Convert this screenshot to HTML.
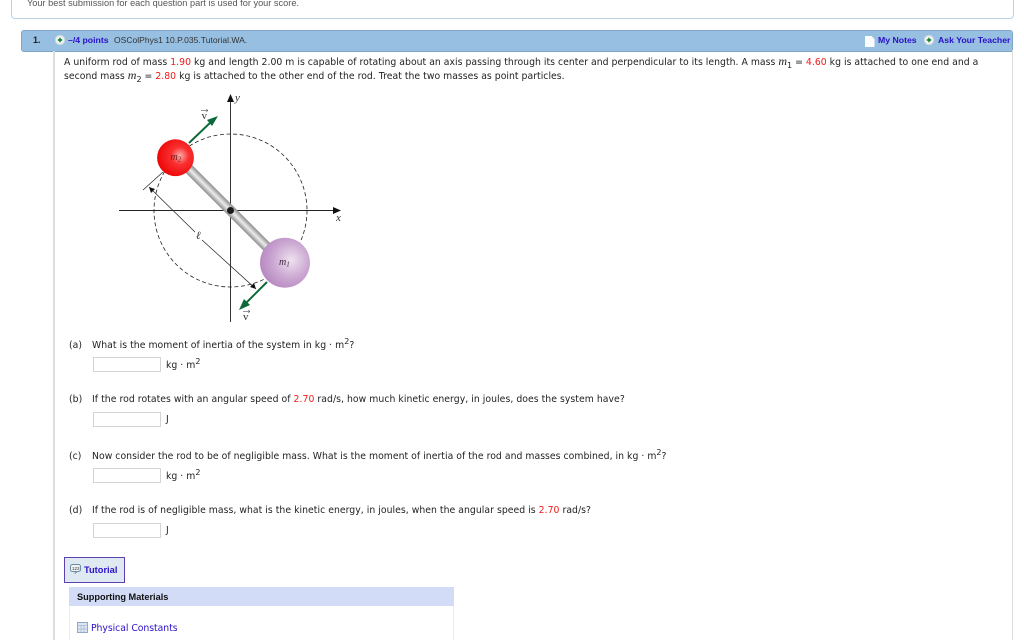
<!DOCTYPE html>
<html><head><meta charset="utf-8">
<style>
html,body{margin:0;padding:0;background:#fff;width:1024px;height:640px;overflow:hidden}
body{position:relative;font-family:"DejaVu Sans","Liberation Sans",sans-serif;color:#222}
.t{position:absolute;white-space:nowrap;font-size:9.3px;line-height:12px;color:#222}
.a{font-family:"Liberation Sans",sans-serif}
.r{color:#f01818}
i{font-family:"Liberation Serif",serif;font-size:12px}
sub,sup{font-size:8px;line-height:0}
.box{position:absolute;width:66px;height:13px;border:1px solid #d4d4d4;left:93px;background:#fff}
.b{color:#2a10c8;font-weight:bold;font-family:"Liberation Sans",sans-serif;font-size:8.7px}
</style></head><body>
<div style="position:absolute;left:11px;top:-10px;width:1001px;height:27px;border:1px solid #b9d3e6;border-radius:4px"></div>
<div class="t a" style="left:27px;top:-3px;font-size:9.2px;color:#555;letter-spacing:.01px">Your best submission for each question part is used for your score.</div>

<div style="position:absolute;left:21px;top:30px;width:990px;height:20px;background:#97bfe1;border:1px solid #7fa6c8;border-radius:3px 3px 0 3px"></div>
<div style="position:absolute;left:53px;top:51px;width:2px;height:589px;background:#ddd"></div>
<div style="position:absolute;left:1012px;top:50px;width:1px;height:590px;background:#ddd"></div>
<div class="t a" style="left:33px;top:34px;font-weight:bold;font-size:9px;color:#222">1.</div>
<svg style="position:absolute;left:54px;top:34px" width="12" height="12"><circle cx="6" cy="6" r="4.8" fill="#eef2f2" stroke="#c5d3dc"/><path d="M3.8 6H8.2M6 3.8V8.2" stroke="#0c7a22" stroke-width="1.4"/></svg>
<div class="t b" style="left:68px;top:34px">–/4 points</div>
<div class="t a" style="left:114px;top:34px;font-size:8.55px;color:#333">OSColPhys1 10.P.035.Tutorial.WA.</div>
<svg style="position:absolute;left:865px;top:36px" width="10" height="11"><path d="M0 0H6.500L9.500 3V11H0Z" fill="#fbfcfd"/></svg>
<div class="t b" style="left:878px;top:34px">My Notes</div>
<svg style="position:absolute;left:923px;top:34px" width="12" height="12"><circle cx="6" cy="6" r="4.8" fill="#eef2f2" stroke="#c5d3dc"/><path d="M3.8 6H8.2M6 3.8V8.2" stroke="#0c7a22" stroke-width="1.4"/></svg>
<div class="t b" style="left:938px;top:34px">Ask Your Teacher</div>

<div class="t" style="left:64px;top:55px;letter-spacing:.02px">A uniform rod of mass <span class="r">1.90</span> kg and length 2.00 m is capable of rotating about an axis passing through its center and perpendicular to its length. A mass <i>m</i><sub>1</sub> = <span class="r">4.60</span> kg is attached to one end and a</div>
<div class="t" style="left:64px;top:69px;letter-spacing:.02px">second mass <i>m</i><sub>2</sub> = <span class="r">2.80</span> kg is attached to the other end of the rod. Treat the two masses as point particles.</div>

<svg style="position:absolute;left:110px;top:90px" width="240" height="240" viewBox="0 0 240 240">
<defs>
<radialGradient id="g1" cx=".62" cy=".45" r=".6"><stop offset="0" stop-color="#ffb0b0"/><stop offset=".4" stop-color="#f93030"/><stop offset="1" stop-color="#ee0808"/></radialGradient>
<radialGradient id="g2" cx=".62" cy=".45" r=".65"><stop offset="0" stop-color="#efe2f0"/><stop offset=".55" stop-color="#cba8d2"/><stop offset="1" stop-color="#b586bf"/></radialGradient>
<linearGradient id="rod" x1="0" y1="0" x2="0" y2="1"><stop offset="0" stop-color="#8c8c8c"/><stop offset=".5" stop-color="#ececec"/><stop offset="1" stop-color="#8c8c8c"/></linearGradient>
</defs>
<circle cx="120.500" cy="120.500" r="76.500" fill="none" stroke="#222" stroke-width=".8" stroke-dasharray="4 2.6"/>
<path d="M120.500 6V232M9 120.500H226" stroke="#222" stroke-width=".9"/>
<path d="M120.500 4l-3.500 8h7zM231 120.500l-8-3.500v7z" fill="#111"/>
<rect x="35" y="115.500" width="170" height="10" fill="url(#rod)" transform="rotate(45 120.500 120.500)"/>
<circle cx="65.500" cy="67.700" r="18.400" fill="url(#g1)"/>
<circle cx="175" cy="172.700" r="25" fill="url(#g2)"/>
<circle cx="120.500" cy="120.500" r="3.500" fill="#1a1a1a"/>
<path d="M79 53L102 31" stroke="#0c6a3a" stroke-width="2"/><path d="M108 26L97 30l5 6z" fill="#0c6a3a"/>
<path d="M157 192L135 214" stroke="#0c6a3a" stroke-width="2"/><path d="M129 220L140 215l-6-6z" fill="#0c6a3a"/>
<path d="M33 100L53 82M39 97L85 142M92 150L146 199" stroke="#222" stroke-width=".7" fill="none"/>
<path d="M39 97l6 2-4 4zM146 199l-6-2 4-4z" fill="#111"/>
<text x="125" y="11" font-family="Liberation Serif" font-style="italic" font-size="11" fill="#333">y</text>
<text x="226" y="131" font-family="Liberation Serif" font-style="italic" font-size="11" fill="#333">x</text>
<text x="86" y="149" font-family="Liberation Serif" font-style="italic" font-size="11" fill="#333">ℓ</text>
<text x="60.500" y="70" font-family="Liberation Serif" font-style="italic" font-size="10" fill="#702020">m<tspan font-size="7" dy="1.500">2</tspan></text>
<text x="169" y="175" font-family="Liberation Serif" font-style="italic" font-size="10" fill="#402a40">m<tspan font-size="7" dy="1.500">1</tspan></text>
<text x="91.500" y="29" font-family="Liberation Serif" font-size="11" fill="#333">v</text><path d="M91 20.500h7m-2-1.500l2 1.500-2 1.500" stroke="#333" stroke-width=".5" fill="none"/>
<text x="133" y="230" font-family="Liberation Serif" font-size="11" fill="#333">v</text><path d="M133 221.500h7m-2-1.500l2 1.500-2 1.500" stroke="#333" stroke-width=".5" fill="none"/>
</svg>

<div class="t" style="left:69px;top:340px;letter-spacing:.02px">(a)</div>
<div class="t" style="left:92px;top:340px;letter-spacing:.04px">What is the moment of inertia of the system in kg · m<sup>2</sup>?</div>
<div class="box" style="top:357px"></div>
<div class="t" style="left:166px;top:360px;letter-spacing:.02px">kg · m<sup>2</sup></div>

<div class="t" style="left:69px;top:394px;letter-spacing:.02px">(b)</div>
<div class="t" style="left:92px;top:394px;letter-spacing:.04px">If the rod rotates with an angular speed of <span class="r">2.70</span> rad/s, how much kinetic energy, in joules, does the system have?</div>
<div class="box" style="top:412px"></div>
<div class="t" style="left:166px;top:414px">J</div>

<div class="t" style="left:69px;top:451px;letter-spacing:.02px">(c)</div>
<div class="t" style="left:92px;top:451px;letter-spacing:.025px">Now consider the rod to be of negligible mass. What is the moment of inertia of the rod and masses combined, in kg · m<sup>2</sup>?</div>
<div class="box" style="top:468px"></div>
<div class="t" style="left:166px;top:471px;letter-spacing:.02px">kg · m<sup>2</sup></div>

<div class="t" style="left:69px;top:505px;letter-spacing:.02px">(d)</div>
<div class="t" style="left:92px;top:505px;letter-spacing:.03px">If the rod is of negligible mass, what is the kinetic energy, in joules, when the angular speed is <span class="r">2.70</span> rad/s?</div>
<div class="box" style="top:523px"></div>
<div class="t" style="left:166px;top:525px">J</div>

<div style="position:absolute;left:64px;top:557px;width:59px;height:24px;background:#dfe9f1;border:1px solid #5a40b0"></div>
<svg style="position:absolute;left:70px;top:564px" width="12" height="11"><rect x=".5" y=".5" width="10" height="7" rx="2" fill="#eef3f7" stroke="#6f8ba0"/><text x="2" y="6" font-size="4.500" font-family="Liberation Sans" fill="#333">123</text><path d="M5 8l0 2 2-2" fill="#9cb4c6" stroke="#6f8ba0" stroke-width=".5"/></svg>
<div class="t b" style="left:84px;top:564px;font-size:9.3px">Tutorial</div>

<div style="position:absolute;left:69px;top:587px;width:385px;height:53px;border-right:1px solid #e8edfb;border-left:1px solid #e8edfb;box-sizing:border-box"></div>
<div style="position:absolute;left:69px;top:587px;width:385px;height:19px;background:#d3dcf7"></div>
<div class="t a" style="left:77px;top:591px;font-weight:bold;font-size:9.200px;color:#111">Supporting Materials</div>
<svg style="position:absolute;left:77px;top:622px" width="11" height="11"><rect x=".5" y=".5" width="10" height="10" fill="#dbe6f2" stroke="#8ea9c6"/><path d="M.5 3.500H10.500M.5 7H10.500M4 3.500V10.500M7 3.500V10.500" stroke="#a4bad2" stroke-width=".7"/></svg>
<div class="t" style="left:91px;top:623px;color:#2a10c8;letter-spacing:-.05px">Physical Constants</div>
</body></html>
